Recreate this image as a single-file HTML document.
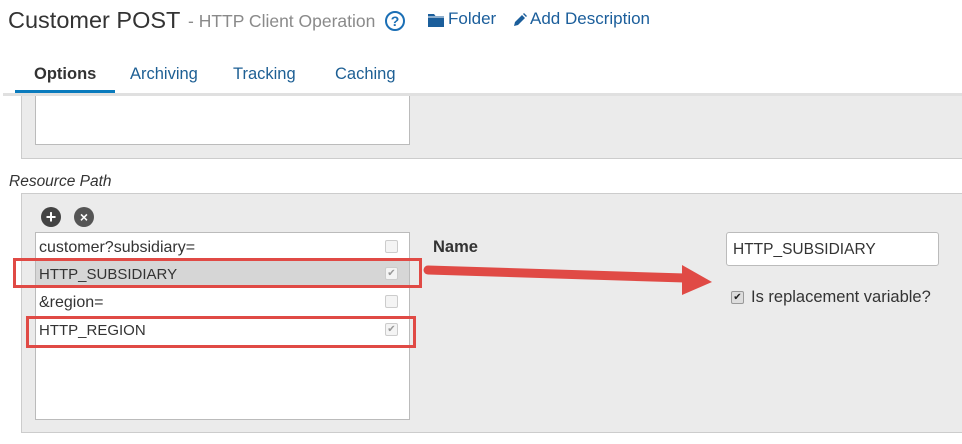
<!DOCTYPE html>
<html><head><style>
*{margin:0;padding:0;box-sizing:border-box}
body{width:962px;height:444px;background:#fff;font-family:"Liberation Sans",sans-serif;position:relative;overflow:hidden;color:#333}
.a{position:absolute;white-space:nowrap}
.blue{color:#1b5e9b}
.tab{font-size:16.5px;color:#1d5f94;top:65px}
.row{position:absolute;left:36px;width:373px;height:27px;font-size:15px;line-height:27px;padding-left:3px;color:#333}
.cb{position:absolute;right:11px;top:6px;width:13px;height:13px;border:1px solid #ccc;border-radius:2px;background:#f4f4f4;font-size:10px;line-height:11px;text-align:center;color:#999}
.red{position:absolute;border:3px solid #e04a45}
</style></head><body>
<div class="a" style="left:8px;top:7px;font-size:23.5px;color:#333">Customer POST</div>
<div class="a" style="left:188px;top:11px;font-size:17.5px;color:#8a8a8a">- HTTP Client Operation</div>
<div class="a" style="left:385px;top:11px;width:20px;height:20px;border:2px solid #1b6fb5;border-radius:50%;font-size:14px;font-weight:bold;color:#1b6fb5;text-align:center;line-height:16px">?</div>
<svg class="a" style="left:428px;top:13px" width="16" height="14" viewBox="0 0 16 14"><path d="M0 1h6l1.5 2H16v11H0z" fill="#1b5e9b"/><path d="M0 4h16" stroke="#fff" stroke-width="1"/></svg>
<div class="a blue" style="left:448px;top:9px;font-size:17px">Folder</div>
<svg class="a" style="left:513px;top:13px" width="14" height="14" viewBox="0 0 14 14"><path d="M1 13l1-4 7-7 3 3-7 7z M10 1l1-1 3 3-1 1z" fill="#1b5e9b"/></svg>
<div class="a blue" style="left:530px;top:9px;font-size:17px">Add Description</div>
<div class="a tab" style="left:34px;color:#333;font-weight:bold">Options</div>
<div class="a tab" style="left:130px">Archiving</div>
<div class="a tab" style="left:233px">Tracking</div>
<div class="a tab" style="left:335px">Caching</div>
<div class="a" style="left:3px;top:93px;width:959px;height:3px;background:#e0e0e0"></div>
<div class="a" style="left:15px;top:90px;width:100px;height:3px;background:#0a7bbd"></div>
<div class="a" style="left:21px;top:96px;width:941px;height:63px;background:#ebebeb;border-left:1px solid #ccc;border-bottom:1px solid #ccc"></div>
<div class="a" style="left:35px;top:96px;width:375px;height:49px;background:#fff;border:1px solid #bbb;border-top:none"></div>
<div class="a" style="left:9px;top:173px;font-size:15.5px;font-style:italic;color:#333">Resource Path</div>
<div class="a" style="left:21px;top:193px;width:945px;height:240px;background:#ebebeb;border:1px solid #ccc"></div>
<div class="a" style="left:41px;top:207px;width:20px;height:20px;border-radius:50%;background:#444;color:#fff;font-weight:bold;font-size:18px;line-height:20px;text-align:center">+</div>
<div class="a" style="left:74px;top:207px;width:20px;height:20px;border-radius:50%;background:#555;color:#fff;font-weight:bold;font-size:14px;line-height:20px;text-align:center">×</div>
<div class="a" style="left:35px;top:232px;width:375px;height:188px;background:#fff;border:1px solid #bbb"></div>
<div class="row" style="top:234px;font-size:16px">customer?subsidiary=<div class="cb"></div></div>
<div class="row" style="top:261px;background:#d6d6d6">HTTP_SUBSIDIARY<div class="cb">✔</div></div>
<div class="row" style="top:289px;font-size:16px">&amp;region=<div class="cb"></div></div>
<div class="row" style="top:317px">HTTP_REGION<div class="cb">✔</div></div>
<div class="red" style="left:13px;top:258px;width:409px;height:30px"></div>
<div class="red" style="left:26px;top:316px;width:390px;height:32px"></div>
<div class="a" style="left:433px;top:238px;font-size:16.5px;font-weight:bold;color:#333">Name</div>
<svg class="a" style="left:420px;top:255px" width="300" height="50"><path d="M8 15 L265 23" stroke="#e04a45" stroke-width="9" stroke-linecap="round"/><path d="M262 10 L292 27 L262 40 Z" fill="#e04a45"/></svg>
<div class="a" style="left:726px;top:232px;width:213px;height:34px;background:#fff;border:1px solid #bbb;border-radius:3px;font-size:15.5px;line-height:33px;padding-left:6px;color:#333">HTTP_SUBSIDIARY</div>
<div class="a" style="left:731px;top:291px;width:13px;height:13px;border:1px solid #999;border-radius:2px;background:#ddd;font-size:10px;line-height:11px;text-align:center;color:#222">✔</div>
<div class="a" style="left:751px;top:288px;font-size:16.5px;color:#333">Is replacement variable?</div>
</body></html>
